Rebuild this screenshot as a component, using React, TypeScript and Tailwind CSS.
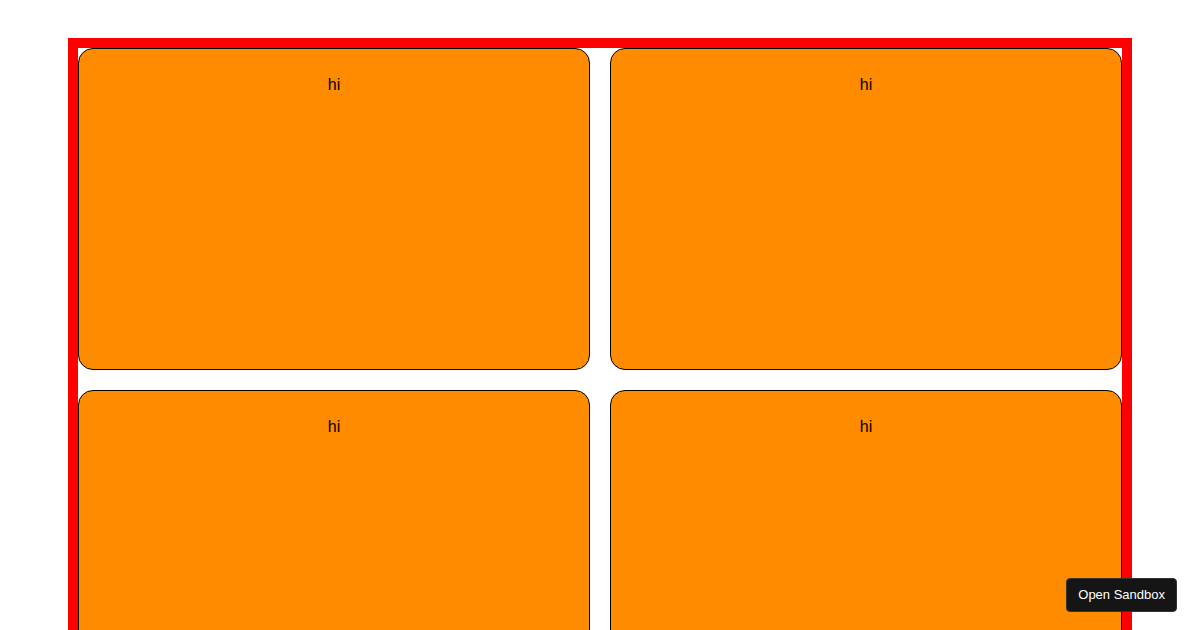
const cards = ['hi', 'hi', 'hi', 'hi'];

const Card = ({ text }: { text: string }) => (
  <div className="min-h-[322px] rounded-[15px] border border-black bg-[#ff8c00] px-5 py-6 text-center">
    <p className="text-base text-black">{text}</p>
  </div>
);

const App = () => {
  return (
    <div className="bg-white font-['Liberation_Sans',Arial,sans-serif]">
      {/* Card grid */}
      <main className="px-[68px] py-[38px]">
        <div className="grid grid-cols-2 gap-5 border-10 border-[#ff0000]">
          {cards.map((text, index) => (
            <Card key={index} text={text} />
          ))}
        </div>
      </main>

      {/* Floating button */}
      <button
        type="button"
        className="fixed right-[23px] bottom-[18px] rounded border border-[#343434] bg-[#151515] px-[11px] py-2 text-[13px] leading-4 text-white"
      >
        Open Sandbox
      </button>
    </div>
  );
};

export default App;
